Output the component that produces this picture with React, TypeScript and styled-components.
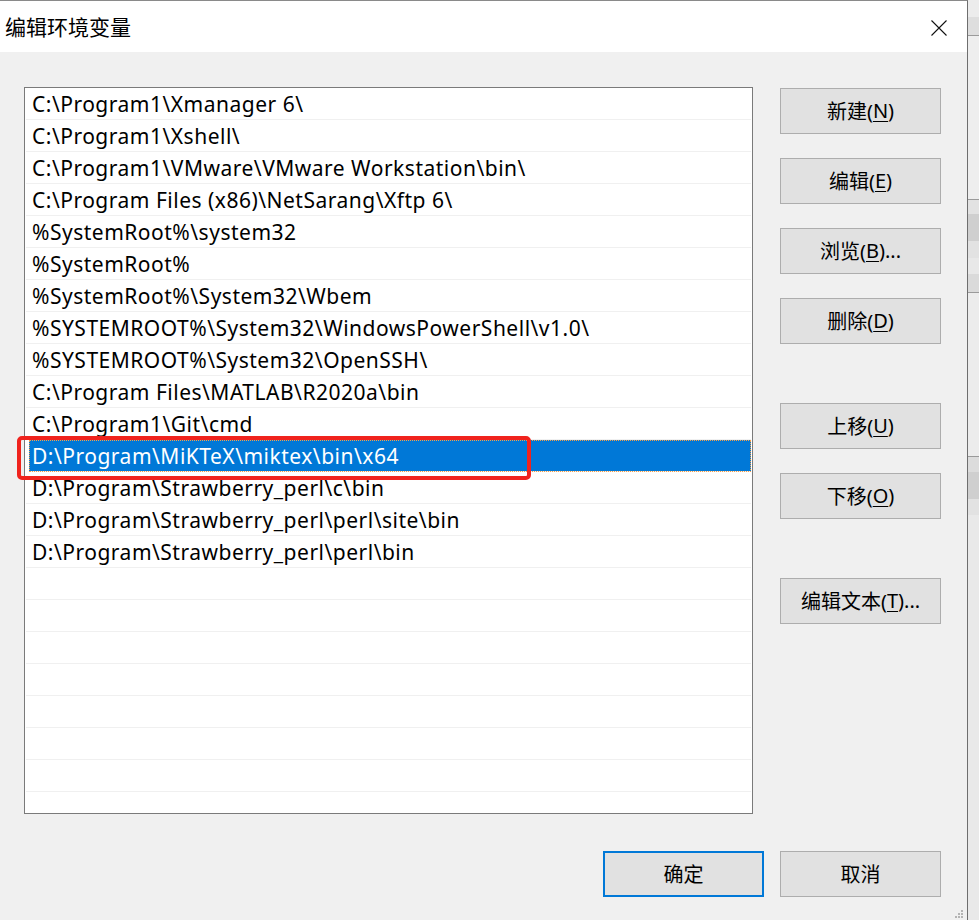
import React from "react";
import styled, { createGlobalStyle } from "styled-components";

const GlobalStyle = createGlobalStyle`
	html, body {
		margin: 0;
		padding: 0;
		background: #e8e8e8;
	}
	body {
		font-family: "Noto Sans", "Noto Sans CJK SC", sans-serif;
		color: #000;
	}
`;

const paths = [
	"C:\\Program1\\Xmanager 6\\",
	"C:\\Program1\\Xshell\\",
	"C:\\Program1\\VMware\\VMware Workstation\\bin\\",
	"C:\\Program Files (x86)\\NetSarang\\Xftp 6\\",
	"%SystemRoot%\\system32",
	"%SystemRoot%",
	"%SystemRoot%\\System32\\Wbem",
	"%SYSTEMROOT%\\System32\\WindowsPowerShell\\v1.0\\",
	"%SYSTEMROOT%\\System32\\OpenSSH\\",
	"C:\\Program Files\\MATLAB\\R2020a\\bin",
	"C:\\Program1\\Git\\cmd",
	"D:\\Program\\MiKTeX\\miktex\\bin\\x64",
	"D:\\Program\\Strawberry_perl\\c\\bin",
	"D:\\Program\\Strawberry_perl\\perl\\site\\bin",
	"D:\\Program\\Strawberry_perl\\perl\\bin",
];

const SELECTED = 11;
const EMPTY_ROWS = 7;

type SideButton = { label: string; key: string; tail?: string; gap: number };

const sideButtons: SideButton[] = [
	{ label: "新建", key: "N", gap: 0 },
	{ label: "编辑", key: "E", gap: 24 },
	{ label: "浏览", key: "B", tail: "...", gap: 24 },
	{ label: "删除", key: "D", gap: 24 },
	{ label: "上移", key: "U", gap: 59 },
	{ label: "下移", key: "O", gap: 24 },
	{ label: "编辑文本", key: "T", tail: "...", gap: 59 },
];

// the window behind the dialog, seen as a thin strip on the right
const strip: [number, string][] = [
	[17, "#ececec"],
	[18, "#dedede"],
	[1, "#9a9a9a"],
	[163, "#eeeeee"],
	[1, "#9a9a9a"],
	[14, "#e2e2e2"],
	[27, "#cfcfcf"],
	[17, "#e2e2e2"],
	[16, "#e8e8e8"],
	[18, "#dadada"],
	[1, "#9a9a9a"],
	[163, "#ececec"],
	[1, "#9a9a9a"],
	[15, "#dcdcdc"],
	[27, "#cfcfcf"],
	[16, "#e2e2e2"],
	[406, "#e9e9e9"],
];

const App = () => {
	return (
		<>
			<GlobalStyle />
			<Screen>
				<Dialog>
					<TitleBar>
						<Title>编辑环境变量</Title>
						<CloseIcon viewBox='0 0 16 16'>
							<path d='M0.5 0.5 L15.5 15.5 M15.5 0.5 L0.5 15.5' />
						</CloseIcon>
					</TitleBar>
					<Body>
						<Main>
							<List>
								{paths.map((p, i) => (
									<Row key={p} selected={i === SELECTED}>
										{p}
										{i === SELECTED && <Highlight />}
									</Row>
								))}
								{Array.from({ length: EMPTY_ROWS }).map((_, i) => (
									<Row key={"empty" + i} />
								))}
							</List>
							<Side>
								{sideButtons.map((b) => (
									<Button key={b.key} gap={b.gap}>
										{b.label}(<u>{b.key}</u>){b.tail}
									</Button>
								))}
							</Side>
						</Main>
						<Footer>
							<Button primary>确定</Button>
							<Button>取消</Button>
						</Footer>
					</Body>
					<Grip viewBox='0 0 8 8'>
						<rect x='6' y='0' width='2' height='2' />
						<rect x='3' y='3' width='2' height='2' />
						<rect x='6' y='3' width='2' height='2' />
						<rect x='0' y='6' width='2' height='2' />
						<rect x='3' y='6' width='2' height='2' />
						<rect x='6' y='6' width='2' height='2' />
					</Grip>
				</Dialog>
				<Strip>
					{strip.map(([h, c], i) => (
						<Band key={i} h={h} color={c} />
					))}
				</Strip>
			</Screen>
		</>
	);
};

export default App;

const Screen = styled.div`
	display: flex;
	width: 979px;
	height: 920px;
	overflow: hidden;
`;

const Dialog = styled.div`
	position: relative;
	width: 967px;
	height: 919px;
	flex-shrink: 0;
	display: flex;
	flex-direction: column;
	background: #f0f0f0;
	border-top: 1px solid #8a8a8a;
	border-right: 1px solid #6e6e6e;
`;

const TitleBar = styled.div`
	height: 51px;
	background: #ffffff;
	display: flex;
	align-items: center;
	justify-content: space-between;
	padding: 0 20px 0 5px;
	flex-shrink: 0;
`;

const Title = styled.div`
	font-family: "Noto Sans CJK SC", sans-serif;
	font-size: 21px;
	line-height: 24px;
	margin-top: -1px;
`;

const CloseIcon = styled.svg`
	width: 16px;
	height: 16px;
	margin-top: 2px;
	stroke: #111;
	stroke-width: 1.1;
	fill: none;
`;

const Body = styled.div`
	flex: 1;
	display: flex;
	flex-direction: column;
	padding: 35px 26px 0 25px;
`;

const Main = styled.div`
	display: flex;
	gap: 27px;
	align-items: flex-start;
`;

const List = styled.div`
	width: 726px;
	height: 725px;
	background: #ffffff;
	border: 1px solid #7a7a7a;
	display: flex;
	flex-direction: column;
	padding: 0 1px 0 1px;
	box-sizing: content-box;
	margin-left: -1px;
`;

const Row = styled.div<{ selected?: boolean }>`
	position: relative;
	height: 29px;
	padding-top: 2px;
	flex-shrink: 0;
	line-height: 29px;
	font-size: 21px;
	letter-spacing: 0.5px;
	white-space: nowrap;
	border-bottom: 1px solid #f0f0f0;
	padding-left: ${(p) => (p.selected ? "3px" : "6px")};
	margin-left: ${(p) => (p.selected ? "3px" : "0")};
	color: ${(p) => (p.selected ? "#ffffff" : "#000000")};
	background: ${(p) => (p.selected ? "#0078d7" : "transparent")};
	outline: ${(p) => (p.selected ? "1px dotted #f5a04a" : "none")};
	outline-offset: -1px;
`;

const Highlight = styled.div`
	position: absolute;
	left: -12px;
	top: -4px;
	width: 506px;
	height: 36px;
	border: 4px solid #f0231d;
	border-radius: 5px;
`;

const Side = styled.div`
	display: flex;
	flex-direction: column;
	padding-top: 1px;
`;

const Button = styled.div<{ gap?: number; primary?: boolean }>`
	width: 161px;
	height: 46px;
	box-sizing: border-box;
	margin-top: ${(p) => p.gap ?? 0}px;
	background: #e1e1e1;
	border: ${(p) => (p.primary ? "2px solid #0078d7" : "1px solid #adadad")};
	display: flex;
	align-items: center;
	justify-content: center;
	font-size: 20px;
	padding-bottom: 1px;
	white-space: nowrap;

	u {
		text-underline-offset: 3px;
		text-decoration-thickness: 1px;
	}
`;

const Footer = styled.div`
	display: flex;
	justify-content: flex-end;
	gap: 16px;
	margin-top: 37px;
`;

const Grip = styled.svg`
	position: absolute;
	right: 4px;
	bottom: 2px;
	width: 8px;
	height: 8px;
	fill: #b4b4b4;
`;

const Strip = styled.div`
	flex: 1;
	display: flex;
	flex-direction: column;
`;

const Band = styled.div<{ h: number; color: string }>`
	height: ${(p) => p.h}px;
	flex-shrink: 0;
	background: ${(p) => p.color};
`;
